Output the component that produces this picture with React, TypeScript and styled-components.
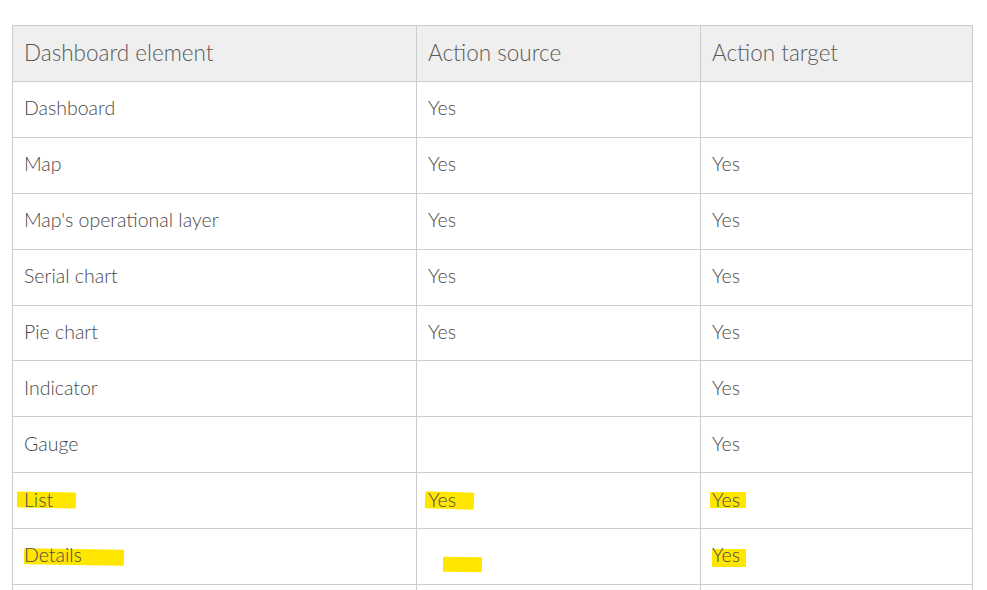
import React from "react";
import styled, { createGlobalStyle } from "styled-components";

const Global = createGlobalStyle`
  html, body { margin: 0; padding: 0; background: #ffffff; }
  body { font-family: Lato, "Noto Sans", sans-serif; }
`;

const Page = styled.div`
  padding: 25px 15px 0 12px;
  width: 960px;
`;

const Table = styled.table`
  border-collapse: collapse;
  width: 960px;
  table-layout: fixed;
  color: #4c4c4c;
`;

const HeadCell = styled.th<{ $w: number }>`
  width: ${(p) => p.$w}px;
  height: 56px;
  padding: 0 11px 2px;
  box-sizing: border-box;
  background: #efefef;
  border: 1px solid #cccccc;
  text-align: left;
  font-weight: 300;
  font-size: 22.5px;
  color: #595959;
  vertical-align: middle;
`;

const Cell = styled.td`
  position: relative;
  height: 55.88px;
  padding: 0 11px 3px;
  box-sizing: border-box;
  border: 1px solid #cccccc;
  font-size: 19.5px;
  font-weight: 300;
  color: #4a4a4a;
  vertical-align: middle;
`;

const Text = styled.span`
  position: relative;
  z-index: 1;
`;

const Mark = styled.span<{ $l: number; $t: number; $w: number; $h: number; $r: number }>`
  position: absolute;
  left: ${(p) => p.$l}px;
  top: ${(p) => p.$t}px;
  width: ${(p) => p.$w}px;
  height: ${(p) => p.$h}px;
  background: #ffe600;
  transform: rotate(${(p) => p.$r}deg);
  border-radius: 1px;
  z-index: 0;
`;

type M = { l: number; t: number; w: number; h: number; r: number };
type Row = { id: string; cells: [string, string, string]; marks?: (M | null)[] };

const rows: Row[] = [
  { id: "a", cells: ["Dashboard", "Yes", ""] },
  { id: "b", cells: ["Map", "Yes", "Yes"] },
  { id: "c", cells: ["Map's operational layer", "Yes", "Yes"] },
  { id: "d", cells: ["Serial chart", "Yes", "Yes"] },
  { id: "e", cells: ["Pie chart", "Yes", "Yes"] },
  { id: "f", cells: ["Indicator", "", "Yes"] },
  { id: "g", cells: ["Gauge", "", "Yes"] },
  {
    id: "h",
    cells: ["List", "Yes", "Yes"],
    marks: [
      { l: 4, t: 19, w: 59, h: 16, r: 1 },
      { l: 8, t: 19, w: 49, h: 17, r: 2 },
      { l: 9, t: 19, w: 36, h: 16, r: 0 },
    ],
  },
  {
    id: "i",
    cells: ["Details", "", "Yes"],
    marks: [
      { l: 11, t: 20, w: 100, h: 16, r: 1 },
      { l: 26, t: 28, w: 39, h: 15, r: 1 },
      { l: 11, t: 20, w: 34, h: 18, r: 0 },
    ],
  },
  { id: "j", cells: ["", "", ""] },
];

const widths = [404, 284, 272];
const heads = ["Dashboard element", "Action source", "Action target"];

export default function App() {
  return (
    <>
      <Global />
      <Page>
        <Table>
          <thead>
            <tr>
              {heads.map((h, i) => (
                <HeadCell key={h} $w={widths[i]}>
                  {h}
                </HeadCell>
              ))}
            </tr>
          </thead>
          <tbody>
            {rows.map((r) => (
              <tr key={r.id}>
                {r.cells.map((c, i) => {
                  const m = r.marks ? r.marks[i] : null;
                  return (
                    <Cell key={i}>
                      {m && <Mark $l={m.l} $t={m.t} $w={m.w} $h={m.h} $r={m.r} />}
                      <Text>{c}</Text>
                    </Cell>
                  );
                })}
              </tr>
            ))}
          </tbody>
        </Table>
      </Page>
    </>
  );
}
